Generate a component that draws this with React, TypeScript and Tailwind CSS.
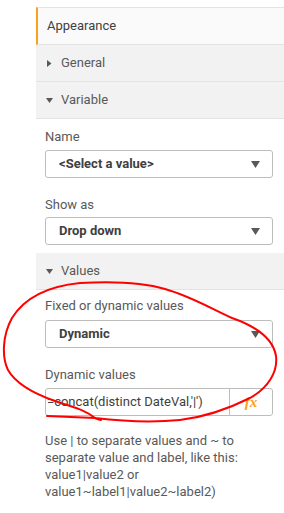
import React from "react";

function Caret({ open }: { open: boolean }) {
	return open ? (
		<svg width="7" height="5" viewBox="0 0 7 5" className="mr-[8px]">
			<path d="M0 0 H7 L3.5 5 Z" fill="#595959" />
		</svg>
	) : (
		<svg width="7" height="7" viewBox="0 0 7 7" className="mr-[8px]">
			<path d="M1 0 L5.5 3.5 L1 7 Z" fill="#595959" />
		</svg>
	);
}

function SectionRow({ label, open }: { label: string; open: boolean }) {
	return (
		<div className="flex items-center h-[37px] pl-[10px] bg-[#f2f2f2] border-b border-[#e3e3e3] text-[13px] text-[#595959]">
			<Caret open={open} />
			<span>{label}</span>
		</div>
	);
}

function Select({ value }: { value: string }) {
	return (
		<div className="flex items-center justify-between h-[28px] mr-[11px] px-[13px] border border-[#bdbdbd] rounded-[3px] bg-white">
			<span className="text-[13px] font-bold text-[#404040]">{value}</span>
			<svg width="9" height="7" viewBox="0 0 9 7" className="mr-[-1px]">
				<path d="M0 0 H9 L4.5 7 Z" fill="#595959" />
			</svg>
		</div>
	);
}

function Label({ children, className = "" }: { children: React.ReactNode; className?: string }) {
	return <div className={`text-[13px] leading-[16px] text-[#595959] ${className}`}>{children}</div>;
}

export default function App() {
	return (
		<div className="relative w-[284px] h-[513px] bg-white overflow-hidden font-['Roboto','Liberation_Sans',sans-serif]">
			<div className="ml-[36px] pt-[7px]">
				<div className="flex items-center h-[38px] pl-[9px] bg-[#fafafa] border-t border-b border-[#e3e3e3] border-l-2 border-l-[#f8a21e] text-[13px] text-[#404040]">
					Appearance
				</div>
				<SectionRow label="General" open={false} />
				<SectionRow label="Variable" open={true} />

				<div className="pl-[9px]">
					<Label className="pt-[10px] pb-[5px]">Name</Label>
					<Select value="<Select a value>" />
					<Label className="pt-[19px] pb-[4px]">Show as</Label>
					<Select value="Drop down" />
				</div>
				<div className="mt-[8px]">
					<SectionRow label="Values" open={true} />
				</div>
				<div className="pl-[9px]">
					<Label className="pt-[8px] pb-[6px]">Fixed or dynamic values</Label>
					<div className="h-[29px] flex flex-col">
						<Select value="Dynamic" />
					</div>
					<Label className="pt-[18px] pb-[5px]">Dynamic values</Label>
					<div className="flex h-[28px] mr-[11px] border border-[#bdbdbd] rounded-[3px] bg-white">
						<div className="flex-1 flex items-center pl-[1px] text-[13px] text-[#404040] whitespace-nowrap overflow-hidden">
							=concat(distinct DateVal,'|')
						</div>
						<div className="w-[43px] flex items-center justify-center border-l border-[#bdbdbd]">
							<span className="font-['Liberation_Serif',serif] italic font-bold text-[15px] text-[#f8a21e]">fx</span>
						</div>
					</div>
					<p className="pt-[16px] pr-[16px] text-[13px] leading-[17px] text-[#595959]">
						Use | to separate values and ~ to separate value and label, like this: value1|value2 or value1~label1|value2~label2)
					</p>
				</div>
			</div>

			<svg className="absolute inset-0 pointer-events-none" width="284" height="513" viewBox="0 0 284 513">
				<path
					d="M47 416 L95 418 C120 421 150 423 180 420 C205 417 230 408 250 398 C268 388 278 372 276 356 C273 338 255 326 232 318 C210 308 190 296 165 289 C145 283 115 281 80 283 C50 286 25 297 12 318 C2 336 2 358 8 370 C16 384 32 393 55 401 C72 407 86 410 95 418 Q100 420 101 420"
					fill="none"
					stroke="#ff0000"
					strokeWidth="2"
					strokeLinecap="round"
					strokeLinejoin="round"
				/>
			</svg>
		</div>
	);
}
